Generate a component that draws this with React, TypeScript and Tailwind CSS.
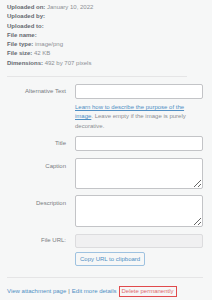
const details: [string, string][] = [
  ['Uploaded on:', 'January 10, 2022'],
  ['Uploaded by:', ''],
  ['Uploaded to:', ''],
  ['File name:', ''],
  ['File type:', 'image/png'],
  ['File size:', '42 KB'],
  ['Dimensions:', '492 by 707 pixels'],
];

function Row({ label, children, top = false }: { label: string; children: React.ReactNode; top?: boolean }) {
  return (
    <div className={`flex ${top ? 'items-start' : 'items-center'}`}>
      <label className={`w-[68px] shrink-0 pr-[9px] text-right text-[#787c82] ${top ? 'pt-[4px]' : ''}`}>{label}</label>
      <div className="w-[128px]">{children}</div>
    </div>
  );
}

export default function App() {
  return (
    <div
      className="h-[300px] w-[212px] overflow-hidden bg-[#f6f7f7] pl-[7px] pr-[9px] pt-[3px] text-[6px] leading-[9.3px] text-[#50575e]"
      style={{ fontFamily: '"Liberation Sans", Arial, sans-serif' }}
    >
      <div>
        {details.map(([k, v]) => (
          <div key={k}>
            <strong className="font-semibold text-[#646970]">{k}</strong>
            {v ? <span className="text-[#8c8f94]"> {v}</span> : null}
          </div>
        ))}
      </div>

      <div className="mt-[8px] mr-[16px] border-t border-[#e5e5e6]" />

      <div className="mt-[7px] flex flex-col">
        <Row label="Alternative Text">
          <input className="block h-[15px] w-full rounded-[2px] border border-[#c3c4c7] bg-white" />
        </Row>
        <div className="ml-[68px] mt-[4px] w-[122px] text-[#8c8f94]">
          <a className="text-[#4f8fc4] underline">Learn how to describe the purpose of the image</a>. Leave empty if the image is purely decorative.
        </div>
        <div className="mt-[5px]">
          <Row label="Title">
            <input className="block h-[15px] w-full rounded-[2px] border border-[#c3c4c7] bg-white" />
          </Row>
        </div>
        <div className="mt-[7px]">
          <Row label="Caption" top>
            <textarea className="block h-[31px] w-full rounded-[2px] border border-[#c3c4c7] bg-white" />
          </Row>
        </div>
        <div className="mt-[6px]">
          <Row label="Description" top>
            <textarea className="block h-[32px] w-full rounded-[2px] border border-[#c3c4c7] bg-white" />
          </Row>
        </div>
        <div className="mt-[7px]">
          <Row label="File URL:">
            <input readOnly className="block h-[14px] w-full rounded-[2px] border border-[#dcdcde] bg-[#f0f0f1]" />
          </Row>
        </div>
        <div className="ml-[68px] mt-[4px]">
          <button className="h-[14px] rounded-[2px] border border-[#9ec2e0] bg-[#f6f7f7] px-[4px] text-[6px] leading-[12px] text-[#4f8fc4]">
            Copy URL to clipboard
          </button>
        </div>
      </div>

      <div className="mt-[11px] border-t border-[#e5e5e6]" />

      <div className="mt-[8px] flex items-center whitespace-nowrap">
        <a className="text-[#4f8fc4]">View attachment page</a>
        <span className="px-[2px] text-[#646970]">|</span>
        <a className="text-[#4f8fc4]">Edit more details</a>
        <a className="ml-[2px] border border-[#e04a4c] px-[2px] leading-[9px] text-[#e06a6c]">Delete permanently</a>
      </div>
    </div>
  );
}
